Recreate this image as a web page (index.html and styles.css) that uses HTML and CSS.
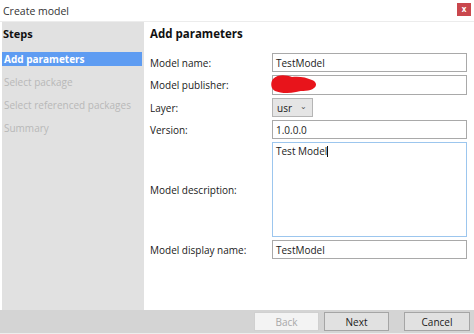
FILE: index.html
```html
<!DOCTYPE html>
<html>
<head>
<meta charset="utf-8">
<link rel="stylesheet" href="styles.css">
</head>
<body>
<div class="window">
  <div class="titlebar">
    <span class="title">Create model</span>
    <span class="close">x</span>
  </div>
  <div class="main">
    <aside class="sidebar">
      <div class="steps-title">Steps</div>
      <ul class="steps">
        <li class="step active">Add parameters</li>
        <li class="step">Select package</li>
        <li class="step">Select referenced packages</li>
        <li class="step">Summary</li>
      </ul>
    </aside>
    <section class="content">
      <h1 class="heading">Add parameters</h1>
      <div class="form">
        <label class="label">Model name:</label>
        <div class="input">TestModel</div>
        <label class="label">Model publisher:</label>
        <div class="input redacted">
          <svg class="scribble" width="48" height="22" viewBox="0 0 48 22">
            <path d="M3 6 C8 1 16 2 22 4 C28 3 36 4 42 7 C47 9 47 13 44 15 C40 19 32 17 26 19 C18 21 10 20 5 18 C1 16 0 10 3 6 Z" fill="#e8141b"/>
          </svg>
        </div>
        <label class="label">Layer:</label>
        <div class="select-wrap"><div class="select"><span>usr</span><span class="chev">&#x2304;</span></div></div>
        <label class="label">Version:</label>
        <div class="input">1.0.0.0</div>
        <label class="label">Model description:</label>
        <div class="textarea">Test Model<span class="caret"></span></div>
        <label class="label">Model display name:</label>
        <div class="input">TestModel</div>
      </div>
    </section>
  </div>
  <div class="footer">
    <button class="btn disabled">Back</button>
    <button class="btn">Next</button>
    <button class="btn cancel">Cancel</button>
  </div>
</div>
</body>
</html>
```
FILE: styles.css
```css
* { box-sizing: border-box; }
html, body { margin: 0; padding: 0; }
body {
  width: 474px;
  height: 334px;
  overflow: hidden;
  background: #fff;
  font-family: "Open Sans", "Noto Sans", sans-serif;
  font-size: 10px;
  color: #1a1a1a;
}
.window {
  display: flex;
  flex-direction: column;
  height: 334px;
}
.titlebar {
  height: 22px;
  flex: none;
  display: flex;
  align-items: center;
  justify-content: space-between;
  padding: 0 3px 0 3px;
  border-bottom: 1px solid #ececec;
}
.title {
  font-size: 10.5px;
  color: #333;
}
.close {
  width: 14px;
  height: 13px;
  background: #c9474d;
  color: #fff;
  font-size: 8px;
  line-height: 12px;
  text-align: center;
  font-weight: bold;
  margin-top: -2px;
}
.main {
  flex: 1;
  display: flex;
  min-height: 0;
}
.sidebar {
  width: 142px;
  flex: none;
  background: #e1e1e1;
  margin-left: 2px;
  padding-top: 4px;
}
.steps-title {
  font-weight: bold;
  font-size: 11px;
  color: #111;
  padding-left: 1px;
  height: 16px;
  line-height: 16px;
}
.steps {
  list-style: none;
  margin: 10px 0 0 0;
  padding: 0;
  display: flex;
  flex-direction: column;
  gap: 9px;
}
.step {
  height: 14px;
  line-height: 14px;
  padding-left: 2px;
  margin-right: 2px;
  color: #b8b8b8;
  font-size: 10px;
}
.step.active {
  background: #5e9cf2;
  color: #fff;
  font-weight: bold;
}
.content {
  flex: 1;
  padding: 4px 7px 0 6px;
}
.heading {
  margin: 0;
  font-size: 11.5px;
  font-weight: bold;
  height: 16px;
  line-height: 16px;
  color: #111;
}
.form {
  margin-top: 11px;
  display: grid;
  grid-template-columns: 122px 195px;
  grid-template-rows: 19px 20px 19px 19px 95px 19px;
  row-gap: 3px;
  align-items: center;
}
.label {
  font-size: 10px;
  color: #1a1a1a;
}
.input {
  height: 100%;
  border: 1px solid #a9a9a9;
  padding: 0 3px;
  display: flex;
  align-items: center;
  font-size: 10px;
  position: relative;
}
.redacted { overflow: visible; }
.scribble {
  position: absolute;
  left: -3px;
  top: -3px;
}
.select-wrap { height: 100%; }
.select {
  width: 41px;
  height: 100%;
  background: #e5e5e5;
  border: 1px solid #b5b5b5;
  display: flex;
  align-items: center;
  justify-content: space-between;
  padding: 0 5px 0 4px;
  font-size: 10px;
}
.chev {
  font-size: 8px;
  color: #555;
  line-height: 8px;
  margin-top: -3px;
}
.textarea {
  height: 100%;
  border: 1px solid #9cc6ee;
  padding: 1px 3px;
  font-size: 10px;
  align-self: stretch;
}
.caret {
  display: inline-block;
  width: 1px;
  height: 11px;
  background: #111;
  vertical-align: -2px;
}
.footer {
  height: 24px;
  flex: none;
  background: #d4d4d4;
  display: flex;
  justify-content: flex-end;
  align-items: flex-start;
  padding: 2px 4px 0 0;
  border-bottom: 1px solid #eee;
}
.btn {
  width: 65px;
  height: 19px;
  margin: 0 0 0 5px;
  padding: 0;
  background: #e1e1e1;
  border: 1px solid #a5a5a5;
  font-family: "Open Sans", "Noto Sans", sans-serif;
  font-size: 10px;
  color: #1a1a1a;
}
.btn.disabled {
  background: #f3f3f3;
  border-color: #d0d0d0;
  color: #a8a8a8;
}
.btn.cancel {
  margin-left: 15px;
  width: 66px;
}
```
